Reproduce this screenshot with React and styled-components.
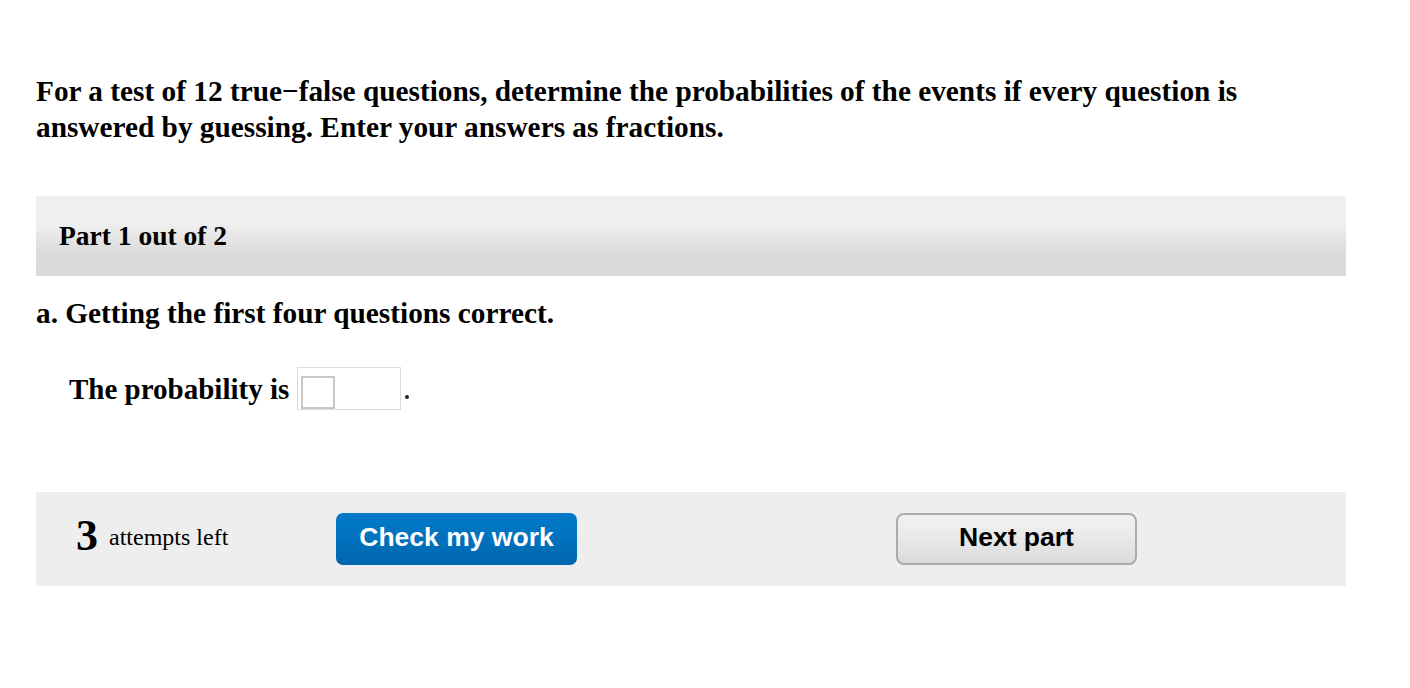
import React from "react";
import styled, { createGlobalStyle } from "styled-components";

const Global = createGlobalStyle`
  html, body { margin: 0; padding: 0; background: #ffffff; }
  body { font-family: "Liberation Serif", "Times New Roman", serif; color: #000; }
`;

const Page = styled.div`
  width: 1310px;
  padding: 73px 0 0 36px;
`;

const Question = styled.p`
  margin: 0;
  font-size: 29.3px;
  line-height: 36px;
  font-weight: bold;
`;

const PartHeader = styled.div`
  margin-top: 51px;
  height: 80px;
  display: flex;
  align-items: center;
  padding-left: 23px;
  background: linear-gradient(to bottom, #f0f0f0 0%, #efefef 35%, #dcdcdc 70%, #d9d9d9 100%);
  font-size: 27.5px;
  font-weight: bold;
`;

const SubQuestion = styled.p`
  margin: 19px 0 0 0;
  font-size: 29.3px;
  line-height: 36px;
  font-weight: bold;
`;

const AnswerLine = styled.div`
  margin-top: 35px;
  padding-left: 33px;
  display: flex;
  align-items: flex-end;
  height: 44px;
  font-size: 29px;
  font-weight: bold;
`;

const Label = styled.span`
  line-height: 36px;
  margin-bottom: 3px;
`;

const MathBox = styled.span`
  margin-left: 8px;
  width: 104px;
  height: 43px;
  border: 1px solid #dcdcdc;
  display: flex;
  align-items: flex-end;
  padding: 0 0 0 3px;
  box-sizing: border-box;
`;

const Slot = styled.span`
  width: 34px;
  height: 33px;
  border: 2px solid #c8c8c8;
  box-sizing: border-box;
`;

const Dot = styled.span`
  width: 4px;
  height: 4px;
  border-radius: 50%;
  background: #222;
  margin: 0 0 11px 4px;
`;

const Footer = styled.div`
  margin-top: 82px;
  height: 94px;
  background: #eeeeee;
  display: flex;
  align-items: center;
  padding-left: 40px;
`;

const Attempts = styled.div`
  width: 260px;
  display: flex;
  align-items: center;
`;

const Count = styled.span`
  font-size: 44px;
  line-height: 44px;
  font-weight: bold;
  margin: 0 11px 6px 0;
`;

const AttemptsText = styled.span`
  font-size: 24px;
  margin-bottom: 3px;
`;

const Button = styled.button`
  width: 241px;
  height: 52px;
  box-sizing: border-box;
  font-family: "Liberation Sans", Arial, Helvetica, sans-serif;
  font-weight: bold;
  font-size: 26.5px;
  cursor: pointer;
  padding: 0 0 3px 0;
  ${(p) =>
    p.$primary
      ? `
    color: #ffffff;
    border: none;
    border-radius: 7px;
    background: linear-gradient(to bottom, #007bc8 0%, #0071bd 50%, #0066ad 100%);
  `
      : `
    color: #000000;
    border: 2px solid #ababab;
    border-radius: 8px;
    background: linear-gradient(to bottom, #f2f2f2 0%, #e8e8e8 50%, #dadada 100%);
  `}
`;

const Spacer = styled.div`
  width: ${(p) => p.$w}px;
  flex: none;
`;

export default function App() {
  return (
    <>
      <Global />
      <Page>
        <Question>
          For a test of 12 true−false questions, determine the probabilities of the events if every question is
          answered by guessing. Enter your answers as fractions.
        </Question>
        <PartHeader>Part 1 out of 2</PartHeader>
        <SubQuestion>a. Getting the first four questions correct.</SubQuestion>
        <AnswerLine>
          <Label>The probability is</Label>
          <MathBox>
            <Slot />
          </MathBox>
          <Dot />
        </AnswerLine>
        <Footer>
          <Attempts>
            <Count>3</Count>
            <AttemptsText>attempts left</AttemptsText>
          </Attempts>
          <Button $primary>Check my work</Button>
          <Spacer $w={319} />
          <Button>Next part</Button>
        </Footer>
      </Page>
    </>
  );
}
